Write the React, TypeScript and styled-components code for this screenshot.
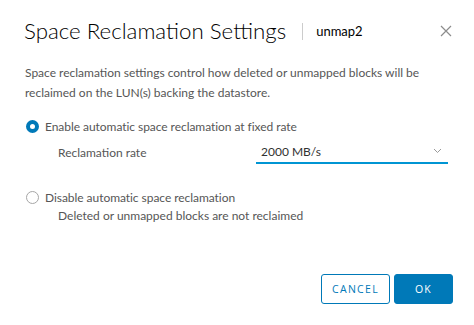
import React from "react";
import styled, { createGlobalStyle } from "styled-components";

const Global = createGlobalStyle`
  html, body { margin: 0; padding: 0; background: #ffffff; }
  body { font-family: "Lato", "Open Sans", sans-serif; color: #565656; }
  * { box-sizing: border-box; }
`;

const Dialog = styled.div`
  width: 474px;
  height: 325px;
  background: #ffffff;
  display: flex;
  flex-direction: column;
  padding: 0 21px 0 24px;
`;

const Header = styled.div`
  height: 62px;
  display: flex;
  align-items: center;
`;

const Title = styled.h1`
  margin: 0;
  font-family: "Lato", sans-serif;
  font-weight: 300;
  font-size: 22.3px;
  color: #000000;
  line-height: 24px;
`;

const Divider = styled.div`
  width: 1px;
  height: 17px;
  background: #cccccc;
  margin: 0 13px 0 16px;
`;

const Subtitle = styled.span`
  font-family: "Lato", sans-serif;
  font-size: 13px;
  color: #000000;
  flex: 1;
`;

const Close = styled.button`
  border: 0;
  background: none;
  padding: 0;
  width: 14px;
  height: 14px;
  display: flex;
  align-items: center;
  justify-content: center;
  cursor: pointer;
`;

const Text = styled.p<{ $indent?: boolean; $top?: number }>`
  margin: ${(p) => p.$top ?? 0}px 0 0 0;
  padding-left: ${(p) => (p.$indent ? "34px" : "1px")};
  font-size: 12px;
  line-height: 20px;
  color: #565656;
`;

const RadioRow = styled.label<{ $top: number }>`
  display: flex;
  align-items: center;
  gap: 6px;
  height: 20px;
  margin-top: ${(p) => p.$top}px;
  padding-left: 2px;
  font-size: 12px;
  letter-spacing: -0.05px;
  color: #565656;
  cursor: pointer;
`;

const RadioDot = styled.span<{ $checked?: boolean }>`
  width: 13px;
  height: 13px;
  border-radius: 50%;
  flex: none;
  border: ${(p) => (p.$checked ? "4px solid #0079b8" : "1px solid #a6a6a6")};
  background: #ffffff;
`;

const FieldRow = styled.div`
  display: grid;
  grid-template-columns: 198px 192px;
  align-items: end;
  margin-top: 4px;
  padding-left: 34px;
  height: 24px;
`;

const FieldLabel = styled.span`
  font-size: 12px;
  line-height: 20px;
  color: #565656;
  padding-bottom: 1px;
`;

const Select = styled.div`
  height: 24px;
  border-bottom: 2px solid #0095d3;
  display: flex;
  align-items: center;
  justify-content: space-between;
  padding: 0 6px 0 5px;
  font-size: 12px;
  color: #313131;
`;

const Footer = styled.div`
  margin-top: auto;
  margin-bottom: 21px;
  display: flex;
  justify-content: flex-end;
  gap: 4px;
`;

const Button = styled.button<{ $primary?: boolean }>`
  height: 30px;
  border-radius: 3px;
  font-family: "Open Sans", sans-serif;
  font-size: 10.5px;
  font-weight: 500;
  letter-spacing: 1.3px;
  text-transform: uppercase;
  cursor: pointer;
  padding: 0;
  width: ${(p) => (p.$primary ? "59px" : "69px")};
  border: 1px solid #0079b8;
  background: ${(p) => (p.$primary ? "#0079b8" : "#ffffff")};
  color: ${(p) => (p.$primary ? "#ffffff" : "#0079b8")};
`;

export default function App() {
  return (
    <>
      <Global />
      <Dialog>
        <Header>
          <Title>Space Reclamation Settings</Title>
          <Divider />
          <Subtitle>unmap2</Subtitle>
          <Close aria-label="Close">
            <svg width="12" height="12" viewBox="0 0 12 12">
              <path d="M1 1 L11 11 M11 1 L1 11" stroke="#8c8c8c" strokeWidth="1.2" fill="none" />
            </svg>
          </Close>
        </Header>
        <Text $top={1}>
          Space reclamation settings control how deleted or unmapped blocks will be reclaimed on the LUN(s) backing the datastore.
        </Text>
        <RadioRow $top={13}>
          <RadioDot $checked />
          Enable automatic space reclamation at fixed rate
        </RadioRow>
        <FieldRow>
          <FieldLabel>Reclamation rate</FieldLabel>
          <Select>
            <span>2000 MB/s</span>
            <svg width="9" height="6" viewBox="0 0 9 6">
              <path d="M1 1 L4.5 4.5 L8 1" stroke="#9a9a9a" strokeWidth="1" fill="none" />
            </svg>
          </Select>
        </FieldRow>
        <RadioRow $top={23}>
          <RadioDot />
          Disable automatic space reclamation
        </RadioRow>
        <Text $indent $top={-1}>Deleted or unmapped blocks are not reclaimed</Text>
        <Footer>
          <Button>Cancel</Button>
          <Button $primary>OK</Button>
        </Footer>
      </Dialog>
    </>
  );
}
